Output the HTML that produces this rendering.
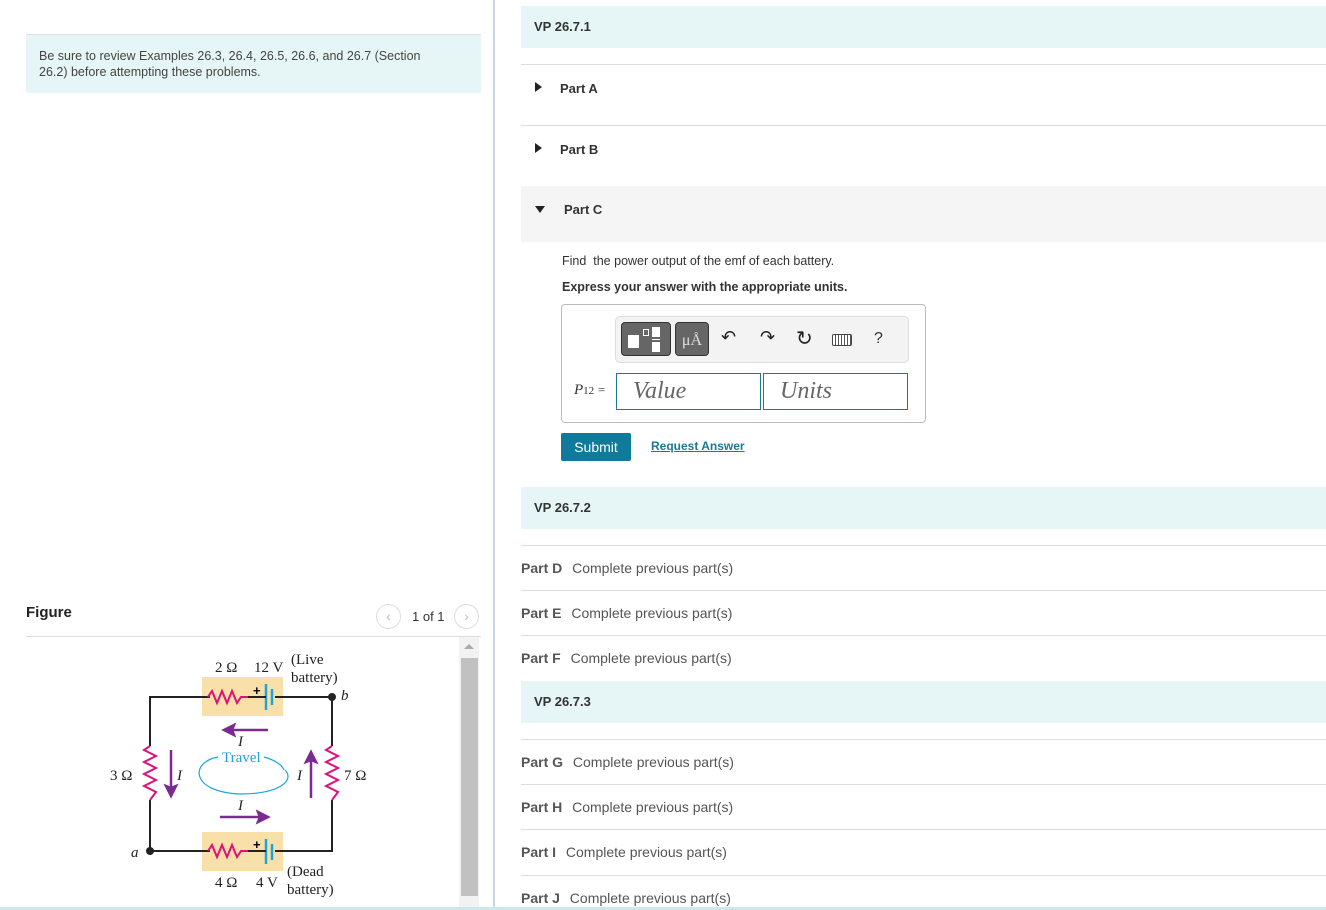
<!DOCTYPE html>
<html><head><meta charset="utf-8"><style>
*{box-sizing:border-box;margin:0;padding:0}
body{width:1326px;height:910px;position:relative;background:#fff;font-family:"Liberation Sans",Arial,sans-serif;color:#333;overflow:hidden}
.a{position:absolute}
.band{background:#e6f5f6}
.hr{position:absolute;height:1px;background:#ddd}
.part{position:absolute;left:521px;font-size:14px;color:#555}
.part b{color:#555;margin-right:6px}
.tb{position:absolute;font-size:13px;font-weight:bold;color:#333}
</style></head><body>
<div class="a band" style="left:26px;top:34px;width:455px;height:59px;border-top:1px solid #d8e4e6"></div>
<div class="a" style="left:39px;top:48px;font-size:12.5px;line-height:16px;color:#444">Be sure to review Examples 26.3, 26.4, 26.5, 26.6, and 26.7 (Section<br>26.2) before attempting these problems.</div>
<div class="a" style="left:493px;top:0;width:2px;height:910px;background:#c8d8e8"></div>

<div class="a" style="left:26px;top:604px;font-size:15px;font-weight:bold;color:#222">Figure</div>
<div class="a" style="left:376px;top:604px;width:25px;height:25px;border:1px solid #ddd;border-radius:50%;color:#bbb;text-align:center;line-height:22px;font-size:14px">&lsaquo;</div>
<div class="a" style="left:412px;top:609px;font-size:13px;color:#333">1 of 1</div>
<div class="a" style="left:454px;top:604px;width:25px;height:25px;border:1px solid #ddd;border-radius:50%;color:#bbb;text-align:center;line-height:22px;font-size:14px">&rsaquo;</div>
<div class="hr" style="left:26px;top:636px;width:455px"></div>
<div class="a" style="left:459px;top:637px;width:20px;height:273px;background:#f2f2f2"></div>
<div class="a" style="left:461px;top:658px;width:17px;height:238px;background:#c1c1c1"></div>
<div class="a" style="left:464px;top:644px;width:0;height:0;border-left:5px solid transparent;border-right:5px solid transparent;border-bottom:5px solid #aaa"></div>
<div class="a" style="left:0;top:907px;width:1326px;height:3px;background:#cde8ea"></div>

<svg class="a" style="left:0;top:0" width="1326" height="910" font-family="Liberation Serif,serif">
<rect x="202" y="677" width="81" height="39" fill="#f9dfa8"/>
<rect x="202" y="832" width="81" height="39" fill="#f9dfa8"/>
<g stroke="#222" stroke-width="2" fill="none">
<polyline points="210,697 150,697 150,746"/><polyline points="150,800 150,851 210,851"/>
<polyline points="275,697 332,697 332,746"/><polyline points="332,800 332,851 275,851"/>
</g>
<g stroke="#e0107a" stroke-width="2" fill="none">
<polyline points="208,697 212,691 217,703 222,691 227,703 232,691 237,703 241,697 248,697"/>
<polyline points="208,851 212,845 217,857 222,845 227,857 232,845 237,857 241,851 248,851"/>
<polyline points="150,746 144,750 156,756 144,762 156,768 144,774 156,780 144,786 156,792 150,800"/>
<polyline points="332,746 326,750 338,756 326,762 338,768 326,774 338,780 326,786 338,792 332,800"/>
</g>
<g stroke="#1aa6d8" stroke-width="2.5"><line x1="266" y1="684" x2="266" y2="710"/><line x1="272" y1="689" x2="272" y2="705"/><line x1="266" y1="839" x2="266" y2="864"/><line x1="272" y1="844" x2="272" y2="860"/></g>
<g stroke="#222" stroke-width="2"><line x1="248" y1="697" x2="266" y2="697"/><line x1="248" y1="851" x2="266" y2="851"/></g>
<text x="253" y="695" font-size="13" font-weight="bold" font-family="Liberation Sans">+</text>
<text x="253" y="849" font-size="13" font-weight="bold" font-family="Liberation Sans">+</text>
<circle cx="332" cy="697" r="4" fill="#222"/><circle cx="150" cy="851" r="4" fill="#222"/>
<g stroke="#7a2a90" stroke-width="2.5" fill="#7a2a90">
<line x1="268" y1="730" x2="228" y2="730"/><path d="M224 730 L234 725 L232 730 L234 735Z"/>
<line x1="220" y1="817" x2="262" y2="817"/><path d="M268 817 L258 812 L260 817 L258 822Z"/>
<line x1="171" y1="750" x2="171" y2="792"/><path d="M171 796 L166 786 L171 788 L176 786Z"/>
<line x1="311" y1="798" x2="311" y2="756"/><path d="M311 752 L306 762 L311 760 L316 762Z"/>
</g>
<path d="M218 757 C190 762 190 792 240 794 C280 794 295 780 285 770" stroke="#1aa6d8" fill="none" stroke-width="1.2"/>
<path d="M264 757 C275 760 282 765 284 770" stroke="#1aa6d8" fill="none" stroke-width="1.2"/>
<text x="222" y="762" font-size="15" fill="#1aa6d8">Travel</text>
<g font-size="15" fill="#222">
<text x="215" y="672">2 Ω</text><text x="254" y="672">12 V</text>
<text x="291" y="664">(Live</text><text x="291" y="682">battery)</text>
<text x="341" y="700" font-style="italic">b</text><text x="131" y="857" font-style="italic">a</text>
<text x="110" y="780">3 Ω</text><text x="344" y="780">7 Ω</text>
<text x="177" y="780" font-style="italic">I</text><text x="297" y="780" font-style="italic">I</text>
<text x="238" y="746" font-style="italic">I</text><text x="238" y="810" font-style="italic">I</text>
<text x="215" y="887">4 Ω</text><text x="256" y="887">4 V</text>
<text x="287" y="876">(Dead</text><text x="287" y="894">battery)</text>
</g>
</svg>

<!-- right -->
<div class="a band" style="left:521px;top:6px;width:805px;height:42px"></div>
<div class="tb" style="left:534px;top:19px">VP 26.7.1</div>
<div class="hr" style="left:521px;top:64px;width:805px"></div>
<div class="a" style="left:535px;top:82px;border-left:7px solid #222;border-top:5px solid transparent;border-bottom:5px solid transparent"></div>
<div class="tb" style="left:560px;top:81px">Part A</div>
<div class="hr" style="left:521px;top:125px;width:805px"></div>
<div class="a" style="left:535px;top:143px;border-left:7px solid #222;border-top:5px solid transparent;border-bottom:5px solid transparent"></div>
<div class="tb" style="left:560px;top:142px">Part B</div>
<div class="a" style="left:521px;top:186px;width:805px;height:56px;background:#f5f5f5"></div>
<div class="a" style="left:535px;top:206px;border-top:7px solid #222;border-left:5px solid transparent;border-right:5px solid transparent"></div>
<div class="tb" style="left:564px;top:202px">Part C</div>
<div class="a" style="left:562px;top:254px;font-size:12.5px;color:#333">Find &nbsp;the power output of the emf of each battery.</div>
<div class="a" style="left:562px;top:280px;font-size:12.5px;font-weight:bold;color:#333">Express your answer with the appropriate units.</div>
<div class="a" style="left:561px;top:304px;width:365px;height:119px;border:1px solid #bbb;border-radius:4px"></div>
<div class="a" style="left:615px;top:316px;width:294px;height:47px;background:#f3f3f3;border:1px solid #ddd;border-radius:5px"></div>
<div class="a" style="left:621px;top:322px;width:50px;height:34px;background:#666;border:1px solid #333;border-radius:4px">
 <div class="a" style="left:6px;top:12px;width:11px;height:13px;background:#fff"></div>
 <div class="a" style="left:21px;top:6px;width:6px;height:7px;border:1px solid #fff"></div>
 <div class="a" style="left:30px;top:4px;width:8px;height:10px;background:#fff"></div>
 <div class="a" style="left:30px;top:16px;width:8px;height:1px;background:#fff"></div>
 <div class="a" style="left:30px;top:19px;width:8px;height:10px;background:#fff"></div>
</div>
<div class="a" style="left:675px;top:322px;width:34px;height:34px;background:#666;border:1px solid #333;border-radius:4px;color:#ddd;font-family:'Liberation Serif',serif;font-size:16px;text-align:center;line-height:36px">μÅ</div>
<div class="a" style="left:721px;top:327px;font-size:18px;color:#222">&#x21B6;</div>
<div class="a" style="left:760px;top:327px;font-size:18px;color:#222">&#x21B7;</div>
<div class="a" style="left:796px;top:326px;font-size:20px;color:#222">&#x21BB;</div>
<div class="a" style="left:832px;top:334px;width:20px;height:12px;border:1px solid #444;border-radius:2px;background:repeating-linear-gradient(90deg,#fff 0 2px,#555 2px 3px)"></div>
<div class="a" style="left:874px;top:330px;font-size:16px;color:#333">?</div>
<div class="a" style="left:574px;top:382px;font-family:'Liberation Serif',serif;font-size:15px;font-style:italic;color:#333">P<span style="font-size:11px;font-style:normal">12</span> <span style="font-style:normal;font-size:13px">=</span></div>
<div class="a" style="left:616px;top:373px;width:145px;height:37px;border:1px solid #1a7a94"></div>
<div class="a" style="left:633px;top:378px;font-family:'Liberation Serif',serif;font-style:italic;font-size:24px;color:#666">Value</div>
<div class="a" style="left:763px;top:373px;width:145px;height:37px;border:1px solid #1a7a94"></div>
<div class="a" style="left:780px;top:378px;font-family:'Liberation Serif',serif;font-style:italic;font-size:24px;color:#666">Units</div>
<div class="a" style="left:561px;top:433px;width:70px;height:28px;background:#0f7a99;border-radius:2px;color:#fff;font-size:14px;text-align:center;line-height:28px">Submit</div>
<div class="a" style="left:651px;top:439px;font-size:12px;font-weight:bold;color:#1a7a94;text-decoration:underline">Request Answer</div>

<div class="a band" style="left:521px;top:487px;width:805px;height:42px"></div>
<div class="tb" style="left:534px;top:500px">VP 26.7.2</div>
<div class="hr" style="left:521px;top:545px;width:805px"></div>
<div class="part" style="top:560px"><b>Part D</b> Complete previous part(s)</div>
<div class="hr" style="left:521px;top:590px;width:805px"></div>
<div class="part" style="top:605px"><b>Part E</b> Complete previous part(s)</div>
<div class="hr" style="left:521px;top:635px;width:805px"></div>
<div class="part" style="top:650px"><b>Part F</b> Complete previous part(s)</div>
<div class="a band" style="left:521px;top:681px;width:805px;height:42px"></div>
<div class="tb" style="left:534px;top:694px">VP 26.7.3</div>
<div class="hr" style="left:521px;top:739px;width:805px"></div>
<div class="part" style="top:754px"><b>Part G</b> Complete previous part(s)</div>
<div class="hr" style="left:521px;top:784px;width:805px"></div>
<div class="part" style="top:799px"><b>Part H</b> Complete previous part(s)</div>
<div class="hr" style="left:521px;top:829px;width:805px"></div>
<div class="part" style="top:844px"><b>Part I</b> Complete previous part(s)</div>
<div class="hr" style="left:521px;top:875px;width:805px"></div>
<div class="part" style="top:890px"><b>Part J</b> Complete previous part(s)</div>
</body></html>
